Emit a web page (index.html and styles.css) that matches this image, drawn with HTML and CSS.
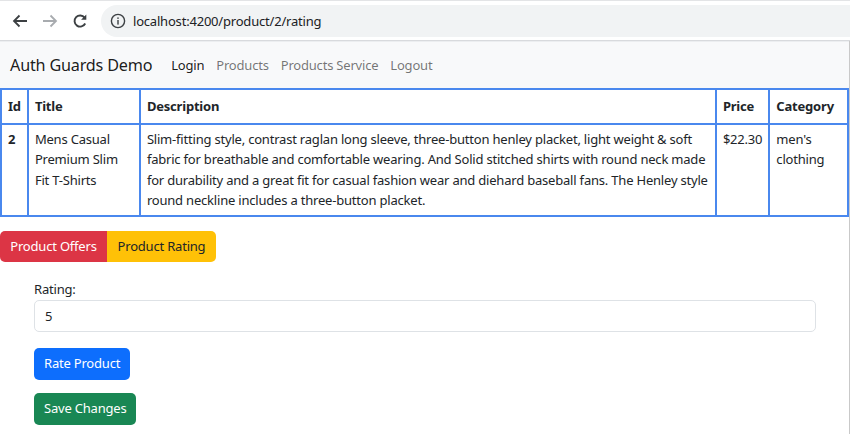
FILE: index.html
```html
<!DOCTYPE html>
<html>
<head>
<meta charset="utf-8">
<link rel="stylesheet" href="styles.css">
</head>
<body>
<div class="toolbar">
  <div class="navbtns">
    <svg class="ico" width="20" height="20" viewBox="0 0 20 20"><path d="M17 10H4M9.5 4.5L4 10l5.5 5.5" fill="none" stroke="#3c4043" stroke-width="1.8"/></svg>
    <svg class="ico" width="20" height="20" viewBox="0 0 20 20"><path d="M3 10h13M10.5 4.5L16 10l-5.5 5.5" fill="none" stroke="#a8abaf" stroke-width="1.8"/></svg>
    <svg class="ico" width="20" height="20" viewBox="0 0 20 20"><path d="M15.2 12.5A5.6 5.6 0 1 1 14.6 6.6" fill="none" stroke="#3c4043" stroke-width="1.9"/><path d="M16.3 3.6v5.2h-5.2z" fill="#3c4043"/></svg>
  </div>
  <div class="omnibox">
    <svg class="info" width="16" height="16" viewBox="0 0 16 16"><circle cx="8" cy="8" r="6.6" fill="none" stroke="#3c4043" stroke-width="1.4"/><rect x="7.3" y="7" width="1.4" height="4.6" fill="#3c4043"/><rect x="7.3" y="4.4" width="1.4" height="1.5" fill="#3c4043"/></svg>
    <span class="url">localhost:4200/product/2/rating</span>
  </div>
</div>
<div class="page">
  <nav class="navbar">
    <span class="brand">Auth Guards Demo</span>
    <a class="nav-link active">Login</a>
    <a class="nav-link">Products</a>
    <a class="nav-link">Products Service</a>
    <a class="nav-link">Logout</a>
  </nav>
  <table class="ptable">
    <thead>
      <tr><th class="c-id">Id</th><th class="c-title">Title</th><th class="c-desc">Description</th><th class="c-price">Price</th><th class="c-cat">Category</th></tr>
    </thead>
    <tbody>
      <tr>
        <td class="bold">2</td>
        <td>Mens Casual Premium Slim Fit T-Shirts</td>
        <td>Slim-fitting style, contrast raglan long sleeve, three-button henley placket, light weight &amp; soft fabric for breathable and comfortable wearing. And Solid stitched shirts with round neck made for durability and a great fit for casual fashion wear and diehard baseball fans. The Henley style round neckline includes a three-button placket.</td>
        <td>$22.30</td>
        <td>men's clothing</td>
      </tr>
    </tbody>
  </table>
  <div class="btn-group">
    <button class="btn btn-danger gl">Product Offers</button>
    <button class="btn btn-warning gr">Product Rating</button>
  </div>
  <div class="form">
    <label class="lbl">Rating:</label>
    <div class="input">5</div>
    <button class="btn btn-primary">Rate Product</button>
    <button class="btn btn-success">Save Changes</button>
  </div>
</div>
</body>
</html>
```
FILE: styles.css
```css
* { box-sizing: border-box; }
html, body { margin: 0; padding: 0; background: #fff; }
body {
  width: 850px;
  height: 434px;
  overflow: hidden;
  font-family: "Noto Sans", "Open Sans", sans-serif;
  font-size: 13px;
  letter-spacing: -0.2px;
  line-height: 20.4px;
  color: #212529;
}
.toolbar {
  height: 41px;
  display: flex;
  align-items: center;
  background: #fff;
  border-top: 1px solid #e3e4e6;
  border-bottom: 1px solid #d8dadd;
}
.navbtns {
  display: flex;
  gap: 10px;
  padding-left: 10px;
  width: 101px;
}
.ico { display: block; }
.omnibox {
  flex: 1;
  height: 32px;
  margin-top: 1px;
  background: #f1f3f4;
  border-radius: 16px 0 0 16px;
  display: flex;
  align-items: center;
  padding-left: 9px;
  gap: 7px;
}
.info { display: block; }
.url {
  font-size: 13px;
  color: #202124;
  letter-spacing: -0.2px;
}
.page {
  width: 850px;
  border-right: 1px solid #c9c9c9;
  height: 393px;
}
.navbar {
  height: 47px;
  background: #f8f9fa;
  display: flex;
  align-items: center;
  padding-left: 10px;
  border-top: 1px solid #eceef0;
}
.brand {
  font-size: 16.2px;
  color: rgba(0,0,0,.9);
  margin-right: 19px;
  margin-top: 1px;
}
.nav-link {
  color: rgba(0,0,0,.55);
  margin-right: 12px;
}
.nav-link.active { color: rgba(0,0,0,.9); }
.ptable {
  width: 849px;
  border-collapse: collapse;
  border: 2px solid #4a88ee;
}
.ptable th, .ptable td {
  border: 2px solid #4a88ee;
  padding: 5px 6px;
  vertical-align: top;
  text-align: left;
}
.ptable th { font-weight: 700; height: 35px; padding-top: 6px; }
.ptable td { padding-top: 4px; padding-bottom: 4px; }
.bold { font-weight: 700; }
.c-id { width: 26px; }
.c-title { width: 112px; }
.c-desc { width: 576px; }
.c-price { width: 53px; }
.btn-group {
  display: flex;
  margin-top: 14px;
}
.btn {
  font-family: inherit;
  font-size: 13px;
  letter-spacing: -0.2px;
  line-height: 20.4px;
  height: 32px;
  border: 0;
  border-radius: 5px;
  padding: 0 10px;
  color: #fff;
  cursor: pointer;
  display: block;
}
.gl { border-radius: 5px 0 0 5px; width: 107px; padding: 0; height: 31px; }
.gr { border-radius: 0 5px 5px 0; width: 109px; padding: 0; height: 31px; }
.btn-danger { background: #dc3545; }
.btn-warning { background: #ffc107; color: #212529; }
.btn-primary { background: #0d6efd; margin-top: 16px; }
.btn-success { background: #198754; margin-top: 13px; }
.form {
  padding-left: 34px;
  padding-right: 33px;
  margin-top: 17px;
}
.lbl { display: block; height: 20px; }
.input {
  margin-top: 1px;
  height: 32px;
  border: 1px solid #dee2e6;
  border-radius: 5px;
  padding: 5px 10px;
  color: #212529;
}
```
